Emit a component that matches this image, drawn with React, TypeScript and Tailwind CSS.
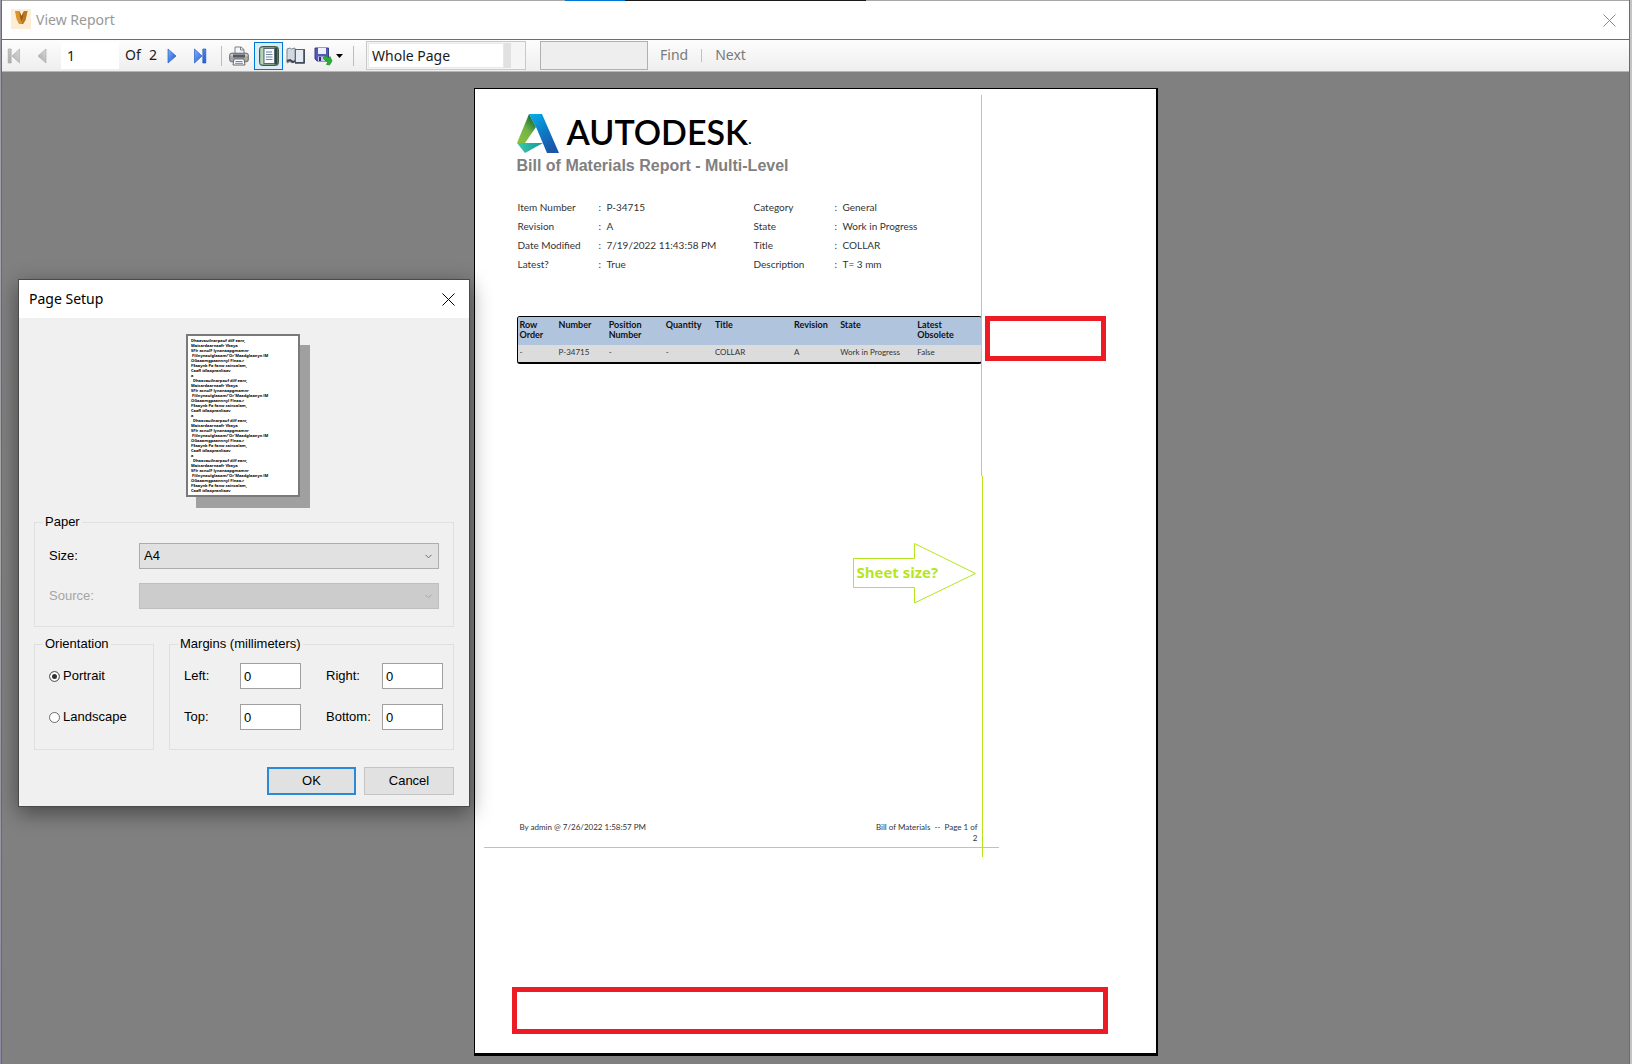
import React, { useId } from "react";

const uiFont = "font-['Noto_Sans',sans-serif]";
const reportFont = "font-[Lato,sans-serif]";

const sampleBlock = [
  "Dhaavauilnarpauf dilf eanr,",
  "Maicardaarnaafr Vbaya",
  "SFlr acnolF lynanaapgmamnr",
  " Flilnynaulglaaam/'Or'Maadglaanyn lM",
  "OGaaamgpaannnyl Flnaa-r",
  "FSaaynk Pa fanw caincalam,",
  "Caafl idlaapranliaav",
  "a",
];

const itemFields = [
  ["Item Number", "P-34715", "Category", "General"],
  ["Revision", "A", "State", "Work in Progress"],
  ["Date Modified", "7/19/2022 11:43:58 PM", "Title", "COLLAR"],
  ["Latest?", "True", "Description", "T= 3 mm"],
];

const columns = [
  { head: "Row Order", cell: "-", width: "w-[39px]" },
  { head: "Number", cell: "P-34715", width: "w-[50px]" },
  { head: "Position Number", cell: "-", width: "w-[57px]" },
  { head: "Quantity", cell: "-", width: "w-[49px]" },
  { head: "Title", cell: "COLLAR", width: "w-[79px]" },
  { head: "Revision", cell: "A", width: "w-[46px]" },
  { head: "State", cell: "Work in Progress", width: "w-[77px]" },
  { head: "Latest Obsolete", cell: "False", width: "w-[65px]" },
];

function VaultIcon() {
  return (
    <svg width="20" height="20" viewBox="0 0 20 20" aria-hidden="true">
      <rect width="20" height="20" fill="#fdecd6" />
      <path d="M4 2h4.500l2 5L13 2h3.500l-2 9-2.500 4H8l-2.500-5z" fill="#d9962f" />
      <path d="M8.500 2l2 5L13 2l-.500 6-2 5-1.500-5z" fill="#9c5c17" />
      <path d="M13 2h3.500l-2 9-2.500 4h-1.500l2-6z" fill="#b97620" />
    </svg>
  );
}

function CloseIcon() {
  return (
    <svg width="13" height="13" viewBox="0 0 13 13" fill="none" stroke="currentColor" aria-hidden="true">
      <path d="M.5 .5l12 12M12.500 .5l-12 12" />
    </svg>
  );
}

function EdgeArrow({ kind }: { kind: "first" | "prev" | "next" | "last" }) {
  const id = useId();
  const off = kind === "first" || kind === "prev";
  const flip = off ? "scale(-1 1) translate(-14 0)" : undefined;
  const bar = kind === "first" || kind === "last";
  const stroke = off ? "#aeaeae" : "#2a5cc8";
  return (
    <svg width="14" height="18" viewBox="0 0 14 18" aria-hidden="true">
      <defs>
        <linearGradient id={id} x1="0" y1="0" x2="1" y2="1">
          <stop offset="0" stopColor={off ? "#d8d8d8" : "#7db2f8"} />
          <stop offset="1" stopColor={off ? "#a8a8a8" : "#1f55cc"} />
        </linearGradient>
      </defs>
      <g transform={flip} fill={`url(#${id})`} stroke={stroke} strokeWidth=".7">
        {bar ? <path d="M1.500 2v14L9 9zM9.800 2h3v14h-3z" /> : <path d="M3 2v14L11 9z" />}
      </g>
    </svg>
  );
}

function PrinterIcon() {
  return (
    <svg width="20" height="20" viewBox="0 0 20 20" aria-hidden="true">
      <path d="M6 8V1h6l3 2.500V8z" fill="#f4f6fa" stroke="#7d8288" />
      <path d="M11.500 1v3H15" fill="none" stroke="#7d8288" />
      <rect x=".7" y="7.200" width="18.600" height="8.600" rx="2" fill="#a4a6ab" stroke="#66696e" />
      <rect x="1.500" y="8" width="17" height="2.600" rx="1" fill="#c9cace" />
      <path d="M4 8.500h12v3H4z" fill="#55585d" />
      <circle cx="17" cy="12.500" r=".9" fill="#e8b348" />
      <path d="M5 13h10l1 6H4z" fill="#fff" stroke="#66696e" />
      <path d="M6.500 15.500h7M6 17.300h8" stroke="#4f86d8" />
    </svg>
  );
}

function LayoutIcon() {
  return (
    <svg width="22" height="22" viewBox="0 0 22 22" aria-hidden="true">
      <rect x="1.500" y="1.500" width="19" height="19" rx="3" fill="#7fa386" stroke="#3f5a49" />
      <path d="M18 2.500v17" stroke="#2f4a3b" strokeWidth="3" />
      <path d="M4 3v16" stroke="#b7d0b9" strokeWidth="3" />
      <rect x="6" y="3.500" width="10.500" height="15" fill="#f7fbff" stroke="#5a6b74" />
      <path d="M8 7h6M8 9.500h6.500M8 12h6.500M8 14.500h6.500" stroke="#6e87a3" />
    </svg>
  );
}

function PageSetupIcon() {
  return (
    <svg width="20" height="18" viewBox="0 0 20 18" aria-hidden="true">
      <path d="M1 2l3-1 1.500 1L9 1v13l-3 2-2-1.500L1 16z" fill="#d3d9e0" stroke="#7d8793" />
      <path d="M1 14l3-1 3 2 3-1" fill="none" stroke="#3c434b" strokeWidth="2" />
      <rect x="9.500" y="2.500" width="9" height="13" fill="#e4ebf5" stroke="#5b6674" />
      <path d="M18 3v13H9" fill="none" stroke="#3e4754" strokeWidth="1.500" />
    </svg>
  );
}

function ExportIcon() {
  return (
    <svg width="19" height="20" viewBox="0 0 19 20" aria-hidden="true">
      <path d="M1 2h13.500v13H3l-2-2z" fill="#5558b8" stroke="#3b3d8e" />
      <path d="M4 2h8v6H4z" fill="#eef0fb" />
      <path d="M4 10.500h7V15H4z" fill="#c9cbe6" />
      <path d="M5 11h2v4H5z" fill="#2e2f6b" />
      <path d="M9 12l3-2.500 2.500 2.500 1.500-1.500 2 4.500-2.500 4-3-.5 1-2z" fill="#2cae35" stroke="#178a22" strokeWidth=".7" />
    </svg>
  );
}

function AutodeskMark() {
  return (
    <svg width="42" height="39" viewBox="0 0 42 39" aria-hidden="true">
      <defs>
        <linearGradient id="markGreen" x1="0" y1="1" x2=".7" y2="0">
          <stop offset="0" stopColor="#8cc341" />
          <stop offset=".55" stopColor="#74b343" />
          <stop offset="1" stopColor="#0b6a40" />
        </linearGradient>
        <linearGradient id="markBlue" x1="0" y1="0" x2=".6" y2="1">
          <stop offset="0" stopColor="#05b0ee" />
          <stop offset=".5" stopColor="#0b7fc9" />
          <stop offset="1" stopColor="#1d55a8" />
        </linearGradient>
        <linearGradient id="markTeal" x1="0" y1="0" x2="1" y2="0">
          <stop offset="0" stopColor="#3fc8a8" />
          <stop offset="1" stopColor="#0d9aa0" />
        </linearGradient>
      </defs>
      <path d="M12 0h13l17 39H30L19 13z" fill="url(#markBlue)" />
      <path d="M12 0l7 13L8 29H0z" fill="url(#markGreen)" />
      <path d="M0 29h26L8 39z" fill="url(#markTeal)" />
    </svg>
  );
}

function Separator() {
  return <span className="h-5 w-px bg-[#bdbdbd]" />;
}

function Toolbar() {
  const iconButton = "flex items-center justify-center";
  return (
    <div
      role="toolbar"
      aria-label="Report"
      className={`${uiFont} flex h-[33px] items-center border-y border-t-[#6d6d6d] border-b-[#b4b4b4] bg-linear-to-b from-[#fdfdfd] to-[#eeeeee] pl-[3px] text-[14px] text-[#1a1a1a]`}
    >
      <button type="button" aria-label="First page" disabled className={`${iconButton} w-[18px]`}><EdgeArrow kind="first" /></button>
      <button type="button" aria-label="Previous page" disabled className={`${iconButton} ml-[10px] w-[18px]`}><EdgeArrow kind="prev" /></button>
      <input aria-label="Current page" defaultValue="1" className="ml-[10px] h-[27px] w-[58px] bg-white pl-1.5" />
      <span className="ml-1.5 w-[18px] pb-0.5">Of</span>
      <span className="ml-1.5 w-[12px] pb-0.5">2</span>
      <button type="button" aria-label="Next page" className={`${iconButton} ml-0.5 w-[18px]`}><EdgeArrow kind="next" /></button>
      <button type="button" aria-label="Last page" className={`${iconButton} ml-[10px] mr-3 w-[18px]`}><EdgeArrow kind="last" /></button>
      <Separator />
      <button type="button" aria-label="Print" className={`${iconButton} ml-[7px] w-5`}><PrinterIcon /></button>
      <button type="button" aria-label="Print layout" aria-pressed="true" className={`${iconButton} ml-[5px] h-7 w-[29px] border border-[#0078d7] bg-[#dcecf9]`}><LayoutIcon /></button>
      <button type="button" aria-label="Page setup" className={`${iconButton} ml-[3px] w-5`}><PageSetupIcon /></button>
      <button type="button" aria-label="Export" className={`${iconButton} ml-2 mr-[10px] gap-[3px]`}>
        <ExportIcon />
        <svg width="7" height="4" viewBox="0 0 7 4" aria-hidden="true"><path d="M0 0h7L3.500 4z" /></svg>
      </button>
      <Separator />
      <div className="ml-3 flex h-[29px] w-[160px] border border-[#c8c8c8] bg-[#f5f5f5] p-px">
        <select aria-label="Zoom" className="w-[136px] appearance-none border border-[#e8e8e8] bg-white pl-[3px]">
          <option>Whole Page</option>
        </select>
        <span className="w-[7px] bg-[#e1e1e1]" />
      </div>
      <input aria-label="Text to find" className="ml-[14px] h-[29px] w-[108px] border border-[#b0b0b0] bg-[#eeeeee]" />
      <button type="button" className="ml-3 pb-0.5 text-[#7a7a7a]">Find</button>
      <span className="mx-[13px] h-[13px] w-px bg-[#c0c0c0]" />
      <button type="button" className="pb-0.5 text-[#7a7a7a]">Next</button>
    </div>
  );
}

function Annotations() {
  return (
    <>
      <div className="absolute top-[6px] left-[506px] h-[381px] w-px bg-[#b5e61d]" />
      <div className="absolute top-[387px] left-[507px] h-[381px] w-px bg-[#b5e61d]" />
      <div className="absolute top-[758px] left-[9px] h-px w-[515px] bg-[#b5e61d]" />
      <div className="absolute top-[454px] left-[378px] h-[61px] w-[124px]">
        <svg className="absolute inset-0" width="124" height="61" viewBox="0 0 124 61" fill="none" stroke="#b5e61d" aria-hidden="true">
          <path d="M.5 15.500h61V.5l61 30-61 29.500V44.500H.5z" />
        </svg>
        <span className="relative block pt-[18px] pl-1 font-['Open_Sans',sans-serif] text-[15px] leading-[22px] font-bold text-[#b5e61d]">Sheet size?</span>
      </div>
      <div className="absolute top-[227px] left-[510px] h-[45px] w-[121px] border-[5px] border-[#ed1c24]" />
      <div className="absolute top-[898px] left-[37px] h-[47px] w-[596px] border-[5px] border-[#ed1c24]" />
    </>
  );
}

function Report() {
  return (
    <article className={`${reportFont} relative w-[684px] flex-1 border-t border-r-2 border-b-[3px] border-l border-black bg-white pl-[42px] text-[#333]`}>
      <div className="flex h-[759px] w-[465px] flex-col pt-[25px] pb-1">
        <div className="flex h-[39px] items-start">
          <AutodeskMark />
          <span className="ml-2 text-[34px] leading-9 font-semibold text-black">AUTODESK</span>
          <span className="text-[16px] leading-[48px] text-black">.</span>
        </div>
        <h1 className="mt-px font-['Liberation_Sans',sans-serif] text-[16px] leading-6 font-bold text-[#808080]">
          Bill of Materials Report - Multi-Level
        </h1>
        <dl className="mt-5 text-[10px] leading-[19px]">
          {itemFields.map(([a, av, b, bv]) => (
            <div key={a} className="grid grid-cols-[81px_8px_147px_81px_8px_1fr] pl-px">
              <dt>{a}</dt>
              <span>:</span>
              <dd>{av}</dd>
              <dt>{b}</dt>
              <span>:</span>
              <dd>{bv}</dd>
            </div>
          ))}
        </dl>
        <div className="mt-[42px] overflow-hidden rounded-[3px] border border-b-2 border-black">
          <table className="w-full table-fixed text-left">
            <thead className="bg-[#b0c4de] text-[9px] leading-[10px] text-[#111]">
              <tr className="h-7 align-top">
                {columns.map((c) => (
                  <th key={c.head} className={`${c.width} pt-[3px] pr-2 pl-0.5 font-bold`}>{c.head}</th>
                ))}
              </tr>
            </thead>
            <tbody className="bg-[#dcdcdc] text-[8px] leading-[10px]">
              <tr className="h-[17px] align-top">
                {columns.map((c) => (
                  <td key={c.head} className="pt-0.5 pl-0.5 whitespace-nowrap">{c.cell}</td>
                ))}
              </tr>
            </tbody>
          </table>
        </div>
        <footer className="mt-auto flex justify-between pr-1 pl-[3px] text-[8px] leading-[11px]">
          <span>By admin @ 7/26/2022 1:58:57 PM</span>
          <span className="text-right">Bill of Materials&nbsp; --&nbsp; Page 1 of<br />2</span>
        </footer>
      </div>
      <Annotations />
    </article>
  );
}

function PaperPreview() {
  return (
    <div className="mt-4 ml-[152px] h-[163px] w-[114px] border-2 border-[#7a7a7a] bg-white pt-0.5 pl-[3px] font-['Noto_Sans',sans-serif] text-[4px] leading-[5px] font-bold whitespace-pre text-black shadow-[10px_11px_0_#a0a0a0]">
      {[0, 1, 2, 3].map((block) =>
        sampleBlock.slice(0, block === 3 ? 7 : 8).map((line, i) => (
          <p key={`${block}-${i}`}>{block > 0 && i === 0 ? `  ${line}` : line}</p>
        ))
      )}
    </div>
  );
}

function Dropdown({ label, options, disabled }: { label: string; options: string[]; disabled?: boolean }) {
  const id = useId();
  return (
    <div className="flex h-[26px] items-center">
      <label htmlFor={id} className={disabled ? "w-[90px] text-[#a5a5a5]" : "w-[90px]"}>{label}</label>
      <div className="relative flex-1">
        <select
          id={id}
          disabled={disabled}
          className={
            disabled
              ? "h-[26px] w-full appearance-none border border-[#bfbfbf] bg-[#cccccc] px-1 opacity-100"
              : "h-[26px] w-full appearance-none border border-[#adadad] bg-[#e1e1e1] px-1"
          }
        >
          {options.map((o) => <option key={o}>{o}</option>)}
        </select>
        <svg className="pointer-events-none absolute top-[11px] right-[7px]" width="7" height="5" viewBox="0 0 7 5" fill="none" stroke={disabled ? "#a6a6a6" : "#6b6b6b"} aria-hidden="true">
          <path d="M.5 .8l3 3 3-3" />
        </svg>
      </div>
    </div>
  );
}

function MarginField({ label }: { label: string }) {
  const id = useId();
  return (
    <div className="flex h-[26px] items-center">
      <label htmlFor={id} className="w-[56px]">{label}</label>
      <input id={id} defaultValue="0" className="h-[26px] w-[61px] border border-[#a0a0a0] bg-white px-[3px]" />
    </div>
  );
}

function Radio({ label, checked }: { label: string; checked?: boolean }) {
  return (
    <label className="flex h-[26px] items-center gap-[3px]">
      <input
        type="radio"
        name="orientation"
        defaultChecked={checked}
        className="size-[11px] appearance-none rounded-full border border-[#6b6b6b] bg-white checked:bg-[#333] checked:shadow-[inset_0_0_0_2px_#fff]"
      />
      {label}
    </label>
  );
}

function Group({ title, className, children }: { title: string; className: string; children: React.ReactNode }) {
  return (
    <fieldset className={`min-w-0 border border-[#e0e0e0] ${className}`}>
      <legend className="ml-2 px-0.5 leading-4">{title}</legend>
      {children}
    </fieldset>
  );
}

function PageSetupDialog() {
  return (
    <div
      role="dialog"
      aria-label="Page Setup"
      className="absolute top-[279px] left-[18px] w-[452px] border border-[#4a4a4a] bg-[#f0f0f0] pb-[11px] font-['Liberation_Sans',sans-serif] text-[13px] text-black shadow-[0_6px_20px_rgba(0,0,0,0.45)]"
    >
      <div className="flex h-[38px] items-center justify-between bg-white pr-[14px] pl-[10px]">
        <h2 className={`${uiFont} pb-0.5 text-[14px]`}>Page Setup</h2>
        <button type="button" aria-label="Close"><CloseIcon /></button>
      </div>
      <div className="px-[15px]">
        <PaperPreview />
        <Group title="Paper" className="mt-[17px] h-[113px]">
          <div className="mt-[13px] flex flex-col gap-[14px] px-[14px]">
            <Dropdown label="Size:" options={["A4"]} />
            <Dropdown label="Source:" options={[""]} disabled />
          </div>
        </Group>
        <div className="mt-[9px] flex gap-[15px]">
          <Group title="Orientation" className="h-[114px] w-[120px]">
            <div className="mt-[11px] flex flex-col gap-[15px] pl-[14px]">
              <Radio label="Portrait" checked />
              <Radio label="Landscape" />
            </div>
          </Group>
          <Group title="Margins (millimeters)" className="h-[114px] flex-1">
            <div className="mt-[11px] grid grid-cols-[auto_auto] justify-between gap-y-[15px] pr-[10px] pl-[14px]">
              <MarginField label="Left:" />
              <MarginField label="Right:" />
              <MarginField label="Top:" />
              <MarginField label="Bottom:" />
            </div>
          </Group>
        </div>
        <div className="mt-[17px] flex justify-end gap-2">
          <button type="button" className="h-7 w-[89px] border-2 border-[#2a8ad8] bg-[#e1e1e1]">OK</button>
          <button type="button" className="h-7 w-[90px] border border-[#c4c4c4] bg-[#e1e1e1]">Cancel</button>
        </div>
      </div>
    </div>
  );
}

export default function App() {
  return (
    <div className="relative flex min-h-screen bg-[#808080]">
      <div className="w-px bg-linear-to-b from-[#9a9aa8] via-[#a8acac] to-[#8a8aa0]" />
      <div className="flex min-w-0 flex-1 flex-col border-r border-l border-[#6b6b6b]">
        <div className="flex h-px bg-[#a8a8a8]">
          <span className="ml-[34.600%] w-[60px] bg-[#0078d7]" />
          <span className="w-[241px] bg-[#1a1a1a]" />
        </div>
        <header className="flex h-[38px] items-center bg-white pr-[13px] pl-[9px]">
          <div className="pb-0.5"><VaultIcon /></div>
          <h1 className={`${uiFont} ml-[5px] flex-1 pb-0.5 text-[14px] text-[#999999]`}>View Report</h1>
          <button type="button" aria-label="Close window" className="text-[#8a8a8a]"><CloseIcon /></button>
        </header>
        <Toolbar />
        <main className="flex flex-1 flex-col items-center pt-4 pb-2">
          <Report />
        </main>
      </div>
      <div className="w-0.5 bg-[#c4c4c8]" />
      <PageSetupDialog />
    </div>
  );
}
